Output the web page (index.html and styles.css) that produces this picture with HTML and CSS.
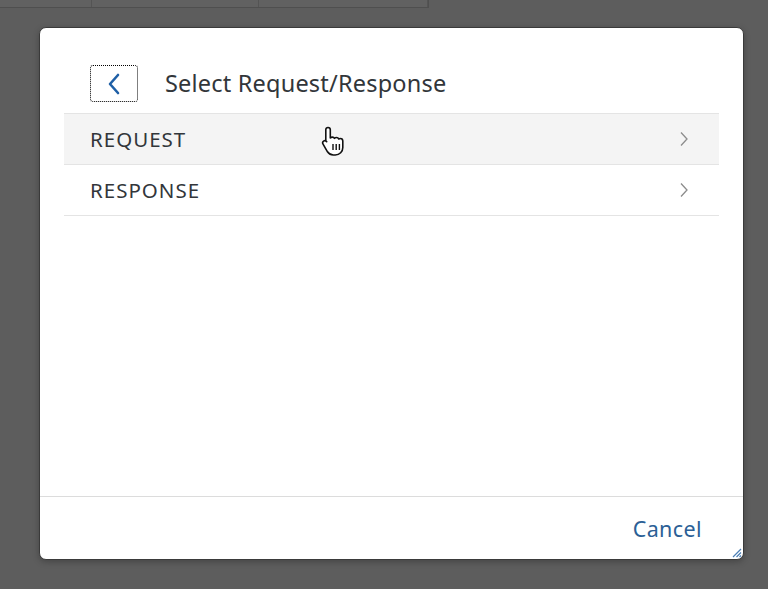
FILE: index.html
```html
<!DOCTYPE html>
<html lang="en">
<head>
    <meta charset="UTF-8">
    <meta name="viewport" content="width=device-width, initial-scale=1.0">
    <title>Select Request/Response</title>
    <link rel="stylesheet" href="styles.css">
</head>
<body>

    <!-- background table behind the dialog -->
    <div class="bg-strip">
        <div class="bg-cell c1"></div>
        <div class="bg-cell c2"></div>
        <div class="bg-cell c3"></div>
    </div>

    <!-- dialog -->
    <div class="dialog">
        <div class="dialog-header">
            <button class="back-btn">
                <svg width="14" height="22" viewBox="0 0 14 22">
                    <path d="M11 2 L3 11 L11 20" fill="none" stroke="#1f5fa6" stroke-width="2.6" stroke-linecap="round" stroke-linejoin="round"/>
                </svg>
            </button>
            <h1>Select Request/Response</h1>
        </div>

        <ul class="list">
            <li class="item hover">
                <span>REQUEST</span>
                <svg class="chev" width="10" height="16" viewBox="0 0 10 16">
                    <path d="M2 1.5 L8 8 L2 14.5" fill="none" stroke="#8c8c8c" stroke-width="1.3"/>
                </svg>
                <svg class="cursor" width="28" height="32" viewBox="0 0 28 32">
                    <path d="M7 2.5c1.4 0 2.3 1 2.3 2.3v8.2c.5-.6 1.3-.9 2.1-.9 1 0 1.7.5 2.1 1.2.5-.5 1.2-.8 2-.8 1.1 0 1.9.6 2.2 1.5.4-.3 1-.5 1.6-.5 1.5 0 2.5 1.1 2.5 2.6v6.3c0 4.3-3.2 7.6-7.5 7.6h-2c-2.6 0-4.4-1.1-5.8-3.2L2.2 19.4c-.8-1.2-.6-2.6.4-3.3 1-.7 2.3-.4 3.1.6l-.9-.9V4.8c0-1.3.9-2.3 2.2-2.3z" fill="#fff" stroke="#111" stroke-width="1.6" stroke-linejoin="round"/>
                    <path d="M12 19v6M15.2 19v6M18.4 19v6" stroke="#111" stroke-width="1.4"/>
                </svg>
            </li>
            <li class="item">
                <span>RESPONSE</span>
                <svg class="chev" width="10" height="16" viewBox="0 0 10 16">
                    <path d="M2 1.5 L8 8 L2 14.5" fill="none" stroke="#8c8c8c" stroke-width="1.3"/>
                </svg>
            </li>
        </ul>

        <div class="dialog-footer">
            <button class="cancel-btn">Cancel</button>
        </div>

        <svg class="resize" width="12" height="12" viewBox="0 0 12 12">
            <path d="M11 3 L3 11 M11 6.5 L6.5 11 M11 9.5 L9.5 11" stroke="#4b7fb5" stroke-width="1.2"/>
        </svg>
    </div>

</body>
</html>
```

FILE: styles.css
```css
body {
    margin: 0;
    padding: 0;
    height: 589px;
    overflow: hidden;
    background: #5d5d5d;
    font-family: "Noto Sans", "Open Sans", Arial, sans-serif;
    color: #32363a;
}

/* background strip */
.bg-strip {
    display: flex;
    width: 428px;
    height: 7px;
    background: #616161;
    border-bottom: 1px solid #4f4f4f;
    border-right: 1px solid #4f4f4f;
}
.bg-cell {
    height: 100%;
    border-right: 1px solid #545454;
}
.c1 { width: 91px; }
.c2 { width: 166px; }
.c3 { width: 168px; }

/* dialog */
.dialog {
    position: relative;
    box-sizing: border-box;
    width: 705px;
    height: 533px;
    margin: 19px 0 0 39px;
    background: #fff;
    border: 1px solid #3a3a3a;
    border-radius: 7px;
    display: flex;
    flex-direction: column;
    box-shadow: 0 2px 6px rgba(0, 0, 0, 0.25);
}

.dialog-header {
    display: flex;
    align-items: flex-end;
    height: 85px;
    padding: 0 0 11px 50px;
    box-sizing: border-box;
}
.back-btn {
    width: 48px;
    height: 37px;
    background: #fff;
    border: 1.5px dotted #000;
    border-radius: 3px;
    display: flex;
    align-items: center;
    justify-content: center;
    padding: 0;
    cursor: pointer;
}
.dialog-header h1 {
    margin: 0 0 3px 27px;
    font-size: 23.5px;
    font-weight: 400;
    letter-spacing: 0.2px;
    line-height: 32px;
    color: #32363a;
}

/* list */
.list {
    list-style: none;
    margin: 0 24px;
    padding: 0;
    flex: 1;
}
.item {
    position: relative;
    display: flex;
    align-items: center;
    justify-content: space-between;
    height: 50px;
    padding: 0 30px 0 26px;
    border-top: 1px solid #e4e4e4;
    font-size: 20.5px;
    letter-spacing: 1px;
    color: #32363a;
}
.item:last-child {
    border-bottom: 1px solid #e4e4e4;
}
.item.hover {
    background: #f4f4f4;
}
.cursor {
    position: absolute;
    left: 257px;
    top: 11px;
}

/* footer */
.dialog-footer {
    height: 62px;
    border-top: 1px solid #dcdcdc;
    display: flex;
    align-items: center;
    justify-content: flex-end;
    padding-right: 41px;
}
.cancel-btn {
    background: none;
    border: none;
    padding: 0;
    font-family: inherit;
    font-size: 21.5px;
    letter-spacing: 0.4px;
    color: #2b5f96;
    cursor: pointer;
}

.resize {
    position: absolute;
    right: 1px;
    bottom: 1px;
}
```
